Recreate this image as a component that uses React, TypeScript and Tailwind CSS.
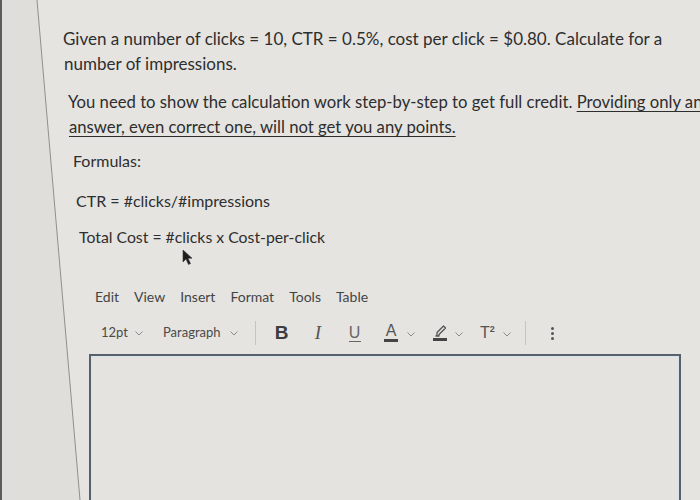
// Canvas quiz question with rich text editor, photographed at a slight angle.

const Chevron = () => (
  <svg width="8" height="5" viewBox="0 0 8 5" className="block">
    <path d="M0.5 0.5 L4 4 L7.5 0.5" fill="none" stroke="#8a8a8a" strokeWidth="1" />
  </svg>
);

const Sep = ({ ml }: { ml: string }) => <span className={`${ml} block w-px h-[24px] bg-[#c4c4c2]`} />;

function Toolbar() {
  return (
    <div className="flex items-center h-[28px] ml-[101px] text-[13px] text-[#4a4a4a]">
      <span className="w-[27px]">12pt</span>
      <span className="ml-[7px]"><Chevron /></span>
      <span className="ml-[20px] w-[59px]">Paragraph</span>
      <span className="ml-[8px]"><Chevron /></span>
      <Sep ml="ml-[17px]" />
      <span className="ml-[18px] w-[15px] flex justify-center font-['Liberation_Sans',sans-serif] font-bold text-[19px] text-[#3c3c3c]">B</span>
      <span className="ml-[24px] w-[10px] flex justify-center font-['Liberation_Serif',serif] italic text-[19px] text-[#555]">I</span>
      <span className="ml-[25px] w-[13px] flex flex-col items-center text-[#666]">
        <span className="font-['Liberation_Sans',sans-serif] text-[16px] leading-[15px]">U</span>
        <span className="block w-[12px] h-px bg-[#666] mt-[1px]" />
      </span>
      <span className="ml-[23px] w-[14px] flex flex-col items-center text-[#555]">
        <span className="font-['Liberation_Sans',sans-serif] text-[16px] leading-[14px]">A</span>
        <span className="block w-[14px] h-[3px] bg-[#444] mt-[1px]" />
      </span>
      <span className="ml-[9px] mt-[2px]"><Chevron /></span>
      <span className="ml-[18px] w-[14px] flex flex-col items-center">
        <svg width="13" height="12" viewBox="0 0 13 12" className="block">
          <path d="M3 10 L2 11 L5 11 L5 9.5 L11.5 3 L9.5 1 L3 7.5 Z" fill="none" stroke="#555" strokeWidth="1.3" strokeLinejoin="round" />
        </svg>
        <span className="block w-[14px] h-[3px] bg-[#444] mt-[1px]" />
      </span>
      <span className="ml-[8px] mt-[2px]"><Chevron /></span>
      <span className="ml-[17px] w-[12px] flex items-start font-['Liberation_Sans',sans-serif] text-[#555]">
        <span className="text-[16px] leading-[16px]">T</span>
        <span className="text-[9px] leading-[9px] font-bold">2</span>
      </span>
      <span className="ml-[11px] mt-[2px]"><Chevron /></span>
      <Sep ml="ml-[14px]" />
      <span className="ml-[25px] flex flex-col gap-[2px]">
        <span className="block w-[3px] h-[3px] rounded-full bg-[#555]" />
        <span className="block w-[3px] h-[3px] rounded-full bg-[#555]" />
        <span className="block w-[3px] h-[3px] rounded-full bg-[#555]" />
      </span>
    </div>
  );
}

export default function App() {
  return (
    <div className="relative w-[700px] h-[500px] overflow-hidden bg-[#e5e4e1] font-['Lato','Noto_Sans',sans-serif] text-[#2e2e2e]">
      {/* page edge, seen at an angle */}
      <svg className="absolute inset-0 pointer-events-none" width="700" height="500">
        <polygon points="0,0 37,0 80,500 0,500" fill="#dfdedb" />
        <line x1="37" y1="0" x2="80" y2="500" stroke="#8f8f8d" strokeWidth="1" />
        <rect x="0" y="0" width="2" height="500" fill="#5c5c5c" />
      </svg>

      <div className="relative pt-[26px]">
        <p className="text-[17px] leading-[25px]">
          <span className="block ml-[63px]">Given a number of clicks = 10, CTR = 0.5%, cost per click = $0.80. Calculate for a</span>
          <span className="block ml-[64px]">number of impressions.</span>
        </p>

        <p className="mt-[14px] text-[16.7px] leading-[25px] whitespace-nowrap">
          <span className="block ml-[68px]">
            You need to show the calculation work step-by-step to get full credit.{" "}
            <span className="underline underline-offset-[3px]">Providing only an</span>
          </span>
          <span className="block ml-[69px] underline underline-offset-[3px]">answer, even correct one, will not get you any points.</span>
        </p>

        <p className="mt-[8px] ml-[73px] text-[16px] leading-[25px]">Formulas:</p>
        <p className="mt-[15px] ml-[76px] text-[16px] leading-[25px]">CTR = #clicks/#impressions</p>
        <p className="mt-[11px] ml-[79px] text-[15.8px] leading-[25px]">Total Cost = #clicks x Cost-per-click</p>

        <div className="mt-[38px] ml-[95px] flex gap-[15px] text-[14px] leading-[20px] text-[#444]">
          <span>Edit</span>
          <span>View</span>
          <span>Insert</span>
          <span>Format</span>
          <span>Tools</span>
          <span>Table</span>
        </div>

        <div className="mt-[12px]">
          <Toolbar />
        </div>

        <div className="mt-[7px] ml-[89px] w-[592px] h-[200px] border-2 border-[#56616c] shadow-[inset_0_0_0_1px_#d6e3ec] bg-[#e4e3e0]" />
      </div>

      {/* mouse pointer */}
      <svg className="absolute left-[182px] top-[249px]" width="12" height="17" viewBox="0 0 12 17">
        <path d="M1 1 L1 13 L4 10 L6.5 15.5 L8.5 14.6 L6 9.2 L10 9.2 Z" fill="#1c1c1c" stroke="#3a3a3a" strokeWidth="0.6" />
      </svg>
    </div>
  );
}
